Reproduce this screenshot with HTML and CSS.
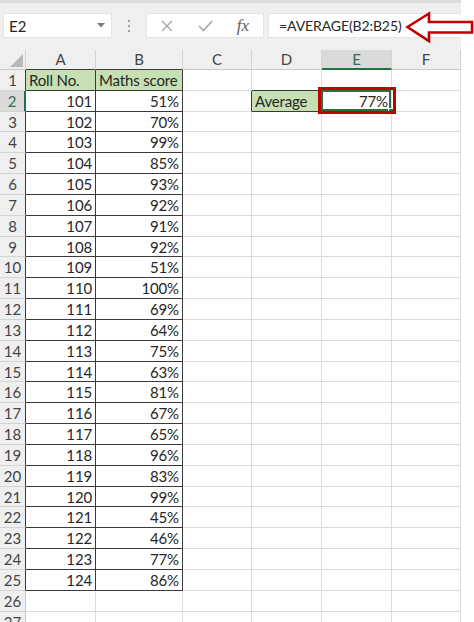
FILE: index.html
```html
<!DOCTYPE html>
<html>
<head>
<meta charset="utf-8">
<title>Excel AVERAGE</title>
<link rel="stylesheet" href="styles.css">
</head>
<body>
<div class="app">
  <div class="toolbar">
    <div class="namebox"><span>E2</span><svg class="dd" width="8" height="5" viewBox="0 0 8 5"><polygon points="0,0 8,0 4,4.5" fill="#7a7a7a"/></svg></div>
    <div class="grip"><i></i><i></i><i></i></div>
    <div class="fnbox">
      <span class="ic"><svg width="12" height="12" viewBox="0 0 12 12"><path d="M1 1 L11 11 M11 1 L1 11" stroke="#a6a6a6" stroke-width="1.4" fill="none"/></svg></span>
      <span class="ic"><svg width="15" height="12" viewBox="0 0 15 12"><path d="M1 6 L5.5 10.5 L14 1" stroke="#a6a6a6" stroke-width="1.6" fill="none"/></svg></span>
      <span class="ic fx">fx</span>
    </div>
    <div class="formula">=AVERAGE(B2:B25)</div>
  </div>
  <div class="sheet">
    <div class="corner"><svg width="26" height="20" viewBox="0 0 26 20"><polygon points="23,4 23,17 10,17" fill="#b9b9b9"/></svg></div>
    <div class="ch bb">A</div><div class="ch bb">B</div><div class="ch">C</div><div class="ch">D</div><div class="ch hsel">E</div><div class="ch">F</div>

    <div class="rh tb">1</div><div class="c t g">Roll No.</div><div class="c t g">Maths score</div><div class="c"></div><div class="c bb"></div><div class="c"></div><div class="c"></div>
    <div class="rh tb rsel">2</div><div class="c t n">101</div><div class="c t n">51%</div><div class="c br"></div><div class="c t g">Average</div><div class="c n sel">77%<span class="selbox"></span><span class="handle"></span><span class="redbox"></span></div><div class="c"></div>
    <div class="rh tb">3</div><div class="c t n">102</div><div class="c t n">70%</div><div class="c"></div><div class="c"></div><div class="c"></div><div class="c"></div>
    <div class="rh tb">4</div><div class="c t n">103</div><div class="c t n">99%</div><div class="c"></div><div class="c"></div><div class="c"></div><div class="c"></div>
    <div class="rh tb">5</div><div class="c t n">104</div><div class="c t n">85%</div><div class="c"></div><div class="c"></div><div class="c"></div><div class="c"></div>
    <div class="rh tb">6</div><div class="c t n">105</div><div class="c t n">93%</div><div class="c"></div><div class="c"></div><div class="c"></div><div class="c"></div>
    <div class="rh tb">7</div><div class="c t n">106</div><div class="c t n">92%</div><div class="c"></div><div class="c"></div><div class="c"></div><div class="c"></div>
    <div class="rh tb">8</div><div class="c t n">107</div><div class="c t n">91%</div><div class="c"></div><div class="c"></div><div class="c"></div><div class="c"></div>
    <div class="rh tb">9</div><div class="c t n">108</div><div class="c t n">92%</div><div class="c"></div><div class="c"></div><div class="c"></div><div class="c"></div>
    <div class="rh tb">10</div><div class="c t n">109</div><div class="c t n">51%</div><div class="c"></div><div class="c"></div><div class="c"></div><div class="c"></div>
    <div class="rh tb">11</div><div class="c t n">110</div><div class="c t n">100%</div><div class="c"></div><div class="c"></div><div class="c"></div><div class="c"></div>
    <div class="rh tb">12</div><div class="c t n">111</div><div class="c t n">69%</div><div class="c"></div><div class="c"></div><div class="c"></div><div class="c"></div>
    <div class="rh tb">13</div><div class="c t n">112</div><div class="c t n">64%</div><div class="c"></div><div class="c"></div><div class="c"></div><div class="c"></div>
    <div class="rh tb">14</div><div class="c t n">113</div><div class="c t n">75%</div><div class="c"></div><div class="c"></div><div class="c"></div><div class="c"></div>
    <div class="rh tb">15</div><div class="c t n">114</div><div class="c t n">63%</div><div class="c"></div><div class="c"></div><div class="c"></div><div class="c"></div>
    <div class="rh tb">16</div><div class="c t n">115</div><div class="c t n">81%</div><div class="c"></div><div class="c"></div><div class="c"></div><div class="c"></div>
    <div class="rh tb">17</div><div class="c t n">116</div><div class="c t n">67%</div><div class="c"></div><div class="c"></div><div class="c"></div><div class="c"></div>
    <div class="rh tb">18</div><div class="c t n">117</div><div class="c t n">65%</div><div class="c"></div><div class="c"></div><div class="c"></div><div class="c"></div>
    <div class="rh tb">19</div><div class="c t n">118</div><div class="c t n">96%</div><div class="c"></div><div class="c"></div><div class="c"></div><div class="c"></div>
    <div class="rh tb">20</div><div class="c t n">119</div><div class="c t n">83%</div><div class="c"></div><div class="c"></div><div class="c"></div><div class="c"></div>
    <div class="rh tb">21</div><div class="c t n">120</div><div class="c t n">99%</div><div class="c"></div><div class="c"></div><div class="c"></div><div class="c"></div>
    <div class="rh tb">22</div><div class="c t n">121</div><div class="c t n">45%</div><div class="c"></div><div class="c"></div><div class="c"></div><div class="c"></div>
    <div class="rh tb">23</div><div class="c t n">122</div><div class="c t n">46%</div><div class="c"></div><div class="c"></div><div class="c"></div><div class="c"></div>
    <div class="rh tb">24</div><div class="c t n">123</div><div class="c t n">77%</div><div class="c"></div><div class="c"></div><div class="c"></div><div class="c"></div>
    <div class="rh tb">25</div><div class="c t n">124</div><div class="c t n">86%</div><div class="c"></div><div class="c"></div><div class="c"></div><div class="c"></div>
    <div class="rh">26</div><div class="c"></div><div class="c"></div><div class="c"></div><div class="c"></div><div class="c"></div><div class="c"></div>
    <div class="rh">27</div><div class="c"></div><div class="c"></div><div class="c"></div><div class="c"></div><div class="c"></div><div class="c"></div>
  </div>
</div>
<svg class="arrow" width="474" height="50" viewBox="0 0 474 50">
  <polygon points="407.5,27 429,13.5 429,22 472,22 472,32.5 429,32.5 429,41" fill="#fff" stroke="#c00000" stroke-width="2.6" stroke-linejoin="miter"/>
</svg>
</body>
</html>
```

FILE: styles.css
```css
* { box-sizing: border-box; }
html, body { margin: 0; padding: 0; background: #fff; }
body {
  width: 474px;
  height: 622px;
  overflow: hidden;
  position: relative;
  font-family: Lato, "Liberation Sans", sans-serif;
  color: #262626;
}
.app { width: 461px; }

.toolbar {
  height: 50px;
  background: #efefef;
  border-top: 3px solid #dcdcdc;
  display: flex;
  align-items: flex-start;
  padding-top: 10px;
}
.namebox {
  margin-left: 3px;
  width: 109px;
  height: 25px;
  background: #fff;
  border: 1px solid #e4e4e4;
  display: flex;
  align-items: center;
  justify-content: space-between;
  padding: 0 6px 0 5px;
  font-size: 15px;
}
.grip {
  width: 34px;
  height: 25px;
  display: flex;
  flex-direction: column;
  align-items: center;
  justify-content: center;
  gap: 3px;
}
.grip i { display: block; width: 2px; height: 2px; background: #a0a0a0; }
.fnbox {
  width: 118px;
  height: 25px;
  background: #fff;
  border: 1px solid #e4e4e4;
  display: grid;
  grid-template-columns: 38px 38px 38px;
  padding-left: 1px;
  align-items: center;
}
.ic { display: flex; justify-content: center; align-items: center; }
.fx {
  font-family: "Liberation Serif", serif;
  font-style: italic;
  font-size: 17px;
  color: #606060;
}
.formula {
  margin-left: 4px;
  flex: 1;
  height: 25px;
  background: #fff;
  border: 1px solid #e4e4e4;
  border-right: none;
  padding-left: 10px;
  font-size: 14px;
  letter-spacing: -0.1px;
  line-height: 23px;
  white-space: nowrap;
}

.sheet {
  display: grid;
  grid-template-columns: 26px 70px 87px 69px 70px 70px 69px;
  grid-template-rows: 20px repeat(27, 20.84px);
  font-size: 15px;
}
.corner, .ch {
  background: #efefef;
  border-right: 1px solid #d4d4d4;
  border-bottom: 1px solid #c9c9c9;
}
.ch {
  text-align: center;
  line-height: 19px;
  color: #444;
}
.ch.hsel {
  background: #dadada;
  border-bottom: 2px solid #217346;
  color: #3d6b50;
}
.rh {
  background: #efefef;
  border-right: 1px solid #c9c9c9;
  border-bottom: 1px solid #d4d4d4;
  text-align: center;
  line-height: 20px;
  color: #444;
}
.rh.rsel { background: #dadada; color: #3d6b50; }
.c {
  border-right: 1px solid #dcdcdc;
  border-bottom: 1px solid #dcdcdc;
  line-height: 20px;
  padding: 0 3px;
  white-space: nowrap;
  background: #fff;
  letter-spacing: -0.15px;
}
.n { text-align: right; }
.t { border-right-color: #3a3a3a; border-bottom-color: #3a3a3a; }
.g { background: #c6e0b4; }
.bb { border-bottom-color: #3a3a3a; }
.br { border-right-color: #3a3a3a; }
.rh.tb { border-right-color: #3a3a3a; }
.rh.rsel { border-right: 2px solid #217346; }

.sel { position: relative; }
.selbox {
  position: absolute;
  inset: -1px 0 0 -1px;
  border: 2px solid #217346;
}
.handle {
  position: absolute;
  right: -3px;
  bottom: -3px;
  width: 6px;
  height: 6px;
  background: #217346;
  border: 1px solid #fff;
}
.redbox {
  position: absolute;
  inset: -4px -5px -3px -4px;
  border: 3px solid #c00000;
}

.arrow { position: absolute; left: 0; top: 0; }
```
